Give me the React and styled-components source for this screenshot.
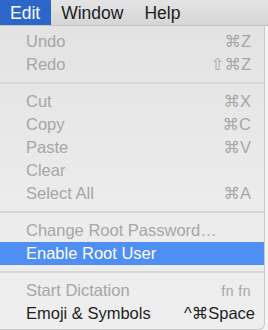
import React from 'react';
import styled, { createGlobalStyle } from 'styled-components';

const Global = createGlobalStyle`
  html, body {
    margin: 0;
    padding: 0;
    background: #f4f4f4;
  }
  body {
    font-family: "Liberation Sans", "DejaVu Sans", Arial, sans-serif;
    -webkit-font-smoothing: antialiased;
  }
`

const Screen = styled.div`
  width: 268px;
  height: 330px;
  overflow: hidden;
  display: flex;
  flex-direction: column;
`

const MenuBar = styled.div`
  height: 26px;
  display: flex;
  align-items: stretch;
  background: linear-gradient(#e4e4e4, #d6d6d6);
  border-bottom: 1px solid #c4c4c4;
  box-sizing: border-box;
`

const BarItem = styled.div`
  display: flex;
  align-items: center;
  padding: 1px 11px 0 10px;
  font-size: 17.5px;
  color: ${p => (p.$active ? '#ffffff' : '#1c1c1c')};
  background: ${p => (p.$active ? '#2c66c8' : 'transparent')};
`

const Menu = styled.div`
  width: 265px;
  flex: 1;
  box-sizing: border-box;
  padding: 4px 0 0;
  background: linear-gradient(#e3e3e3, #ececec 60%, #eeeeee);
  border-right: 1px solid #c9c9c9;
  border-bottom: 1px solid #c9c9c9;
  border-bottom-right-radius: 6px;
  display: flex;
  flex-direction: column;
`

const Row = styled.div`
  height: 23px;
  display: flex;
  align-items: center;
  justify-content: space-between;
  padding: 0 13px 0 26px;
  font-size: 16.5px;
  color: ${p => (p.$highlight ? '#ffffff' : p.$disabled ? '#a6a6a6' : '#1e1e1e')};
  background: ${p => (p.$highlight ? '#4f8ef3' : 'transparent')};
`

const Keys = styled.span`
  font-size: ${p => p.$small ? 14 : 16.5}px;
  letter-spacing: ${p => p.$small ? '0.5px' : '0'};
  margin-right: ${p => p.$shift || 0}px;
`

const Separator = styled.div`
  height: 14px;
  display: flex;
  align-items: center;
  &::after {
    content: '';
    flex: 1;
    height: 2px;
    background: #d7d7d7;
  }
`

const items = [
  { label: 'Undo', keys: '⌘Z', disabled: true },
  { label: 'Redo', keys: '⇧⌘Z', disabled: true },
  'sep',
  { label: 'Cut', keys: '⌘X', disabled: true },
  { label: 'Copy', keys: '⌘C', disabled: true },
  { label: 'Paste', keys: '⌘V', disabled: true },
  { label: 'Clear', keys: '', disabled: true },
  { label: 'Select All', keys: '⌘A', disabled: true },
  'sep',
  { label: 'Change Root Password…', keys: '', disabled: true },
  { label: 'Enable Root User', keys: '', highlight: true },
  'sep',
  { label: 'Start Dictation', keys: 'fn fn', disabled: true, small: true },
  { label: 'Emoji & Symbols', keys: '^⌘Space', shift: -4 },
];

export default function App() {
  return (
    <Screen>
      <Global />
      <MenuBar>
        <BarItem $active>Edit</BarItem>
        <BarItem>Window</BarItem>
        <BarItem>Help</BarItem>
      </MenuBar>
      <Menu>
        {items.map((it, i) =>
          it === 'sep' ? (
            <Separator key={i} />
          ) : (
            <Row key={i} $disabled={it.disabled} $highlight={it.highlight}>
              <span>{it.label}</span>
              <Keys $small={it.small} $shift={it.shift}>{it.keys}</Keys>
            </Row>
          )
        )}
      </Menu>
    </Screen>
  );
}
